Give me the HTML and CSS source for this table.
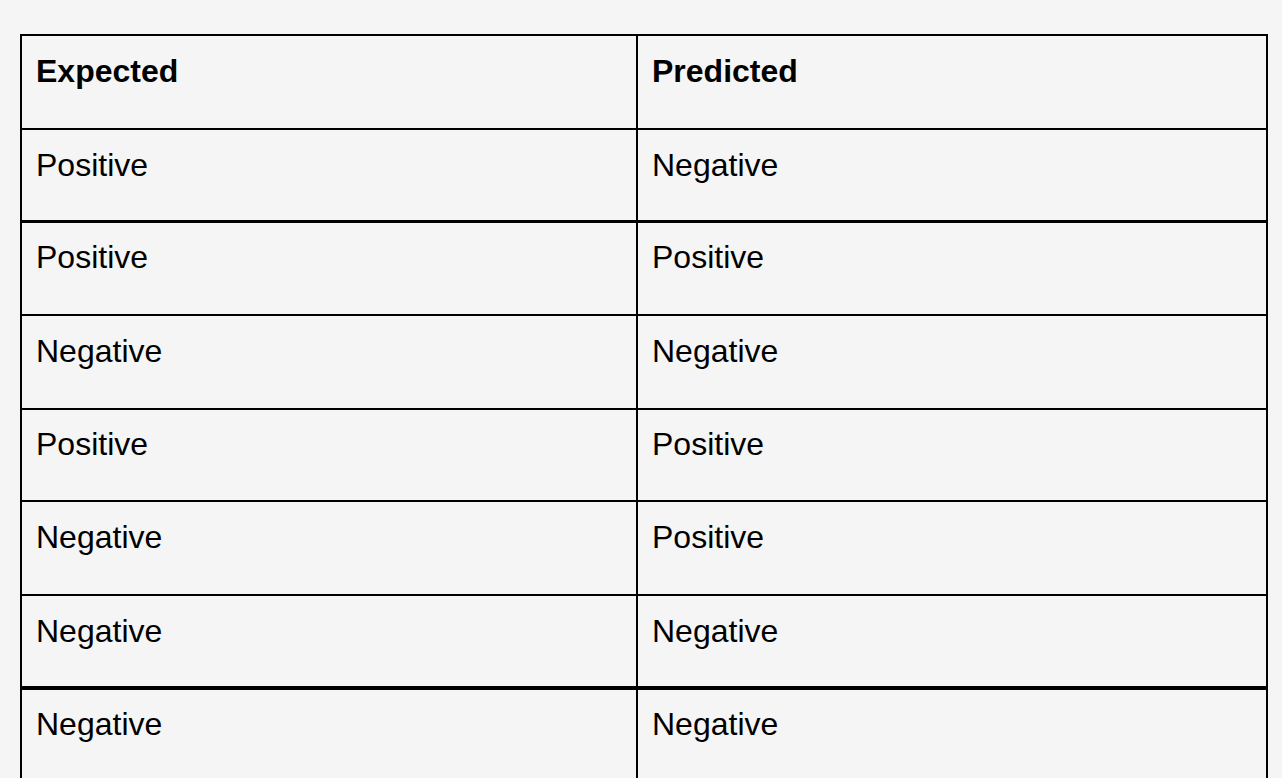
FILE: index.html
```html
<!DOCTYPE html>
<html lang="en">
<head>
<meta charset="utf-8">
<title>Expected vs Predicted</title>
<link rel="stylesheet" href="styles.css">
</head>
<body>
<div class="table">
  <div class="row r1 head"><div class="cell">Expected</div><div class="cell">Predicted</div></div>
  <div class="row r2 thick"><div class="cell">Positive</div><div class="cell">Negative</div></div>
  <div class="row r3"><div class="cell">Positive</div><div class="cell">Positive</div></div>
  <div class="row r4"><div class="cell">Negative</div><div class="cell">Negative</div></div>
  <div class="row r5"><div class="cell">Positive</div><div class="cell">Positive</div></div>
  <div class="row r6"><div class="cell">Negative</div><div class="cell">Positive</div></div>
  <div class="row r7 thick"><div class="cell">Negative</div><div class="cell">Negative</div></div>
  <div class="row r8"><div class="cell">Negative</div><div class="cell">Negative</div></div>
</div>
</body>
</html>
```
FILE: styles.css
```css
html, body {
  background: #f5f5f5;
}
body {
  margin: 34px 0 0 20px;
  font-family: "Liberation Sans", Arial, sans-serif;
  font-size: 32px;
  color: #000;
}
.table {
  width: 1248px;
  box-sizing: border-box;
  border-top: 2px solid #000;
  border-left: 2px solid #000;
}
.row {
  display: grid;
  grid-template-columns: 616px 630px;
}
.cell {
  box-sizing: border-box;
  border-right: 2px solid #000;
  border-bottom: 2px solid #000;
  padding: 17px 14px 0 14px;
  line-height: normal;
  height: 94px;
}
.head .cell { font-weight: bold; }
.thick .cell { border-bottom-width: 3px; }
.r2 .cell { height: 93px; }
.r3 .cell { height: 93px; padding-top: 16px; }
.r5 .cell { height: 92px; padding-top: 16px; }
.r7 .cell { height: 94px; border-bottom-width: 4px; }
.r8 .cell { padding-top: 16px; }
```
